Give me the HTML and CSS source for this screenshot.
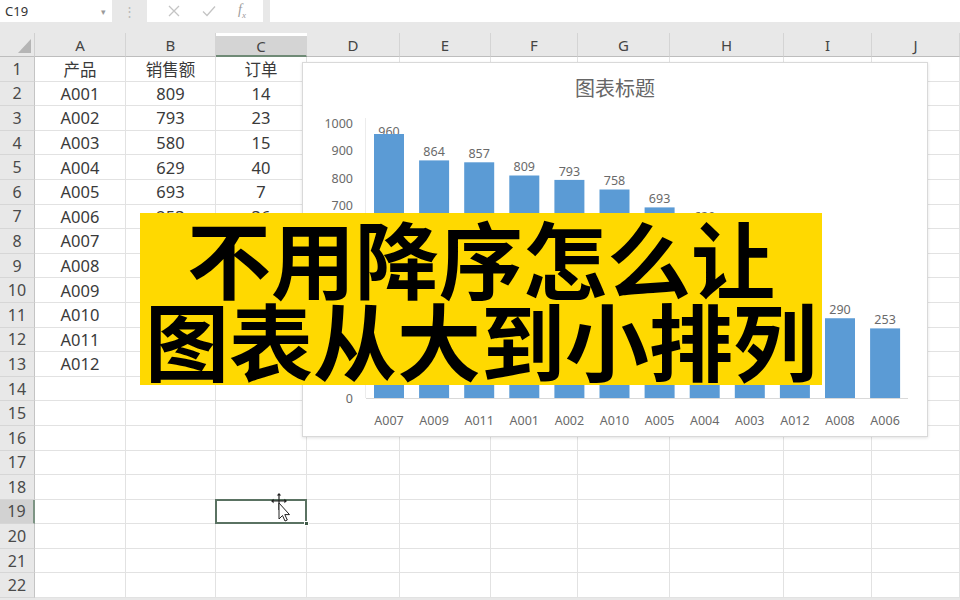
FILE: index.html
```html
<!DOCTYPE html>
<html lang="zh">
<head>
<meta charset="utf-8">
<title>Excel 图表</title>
<link rel="stylesheet" href="styles.css">
</head>
<body>
<div class="app">
  <div class="formula-bar">
    <div class="name-box"><span class="cell-ref">C19</span><span class="caret">▾</span></div>
    <div class="grip">⋮</div>
    <div class="fx-box">
      <svg class="fx-icon" width="12" height="12" viewBox="0 0 12 12"><path d="M1 1L11 11M11 1L1 11" stroke="#c4c4c4" stroke-width="1.3" fill="none"/></svg>
      <svg class="fx-icon" width="14" height="12" viewBox="0 0 14 12"><path d="M1 6.5L5 10.5L13 1.5" stroke="#c4c4c4" stroke-width="1.3" fill="none"/></svg>
      <span class="fx">f<sub>x</sub></span>
    </div>
    <div class="formula-input"></div>
  </div>

  <div class="sheet">
    <div class="corner"><span class="tri"></span></div>
    <div class="ch">A</div><div class="ch">B</div><div class="ch sel">C</div><div class="ch">D</div><div class="ch">E</div><div class="ch">F</div><div class="ch">G</div><div class="ch">H</div><div class="ch">I</div><div class="ch">J</div>

    <div class="rh">1</div><div class="c">产品</div><div class="c">销售额</div><div class="c">订单</div><div class="c"></div><div class="c"></div><div class="c"></div><div class="c"></div><div class="c"></div><div class="c"></div><div class="c"></div>
    <div class="rh">2</div><div class="c">A001</div><div class="c">809</div><div class="c">14</div><div class="c"></div><div class="c"></div><div class="c"></div><div class="c"></div><div class="c"></div><div class="c"></div><div class="c"></div>
    <div class="rh">3</div><div class="c">A002</div><div class="c">793</div><div class="c">23</div><div class="c"></div><div class="c"></div><div class="c"></div><div class="c"></div><div class="c"></div><div class="c"></div><div class="c"></div>
    <div class="rh">4</div><div class="c">A003</div><div class="c">580</div><div class="c">15</div><div class="c"></div><div class="c"></div><div class="c"></div><div class="c"></div><div class="c"></div><div class="c"></div><div class="c"></div>
    <div class="rh">5</div><div class="c">A004</div><div class="c">629</div><div class="c">40</div><div class="c"></div><div class="c"></div><div class="c"></div><div class="c"></div><div class="c"></div><div class="c"></div><div class="c"></div>
    <div class="rh">6</div><div class="c">A005</div><div class="c">693</div><div class="c">7</div><div class="c"></div><div class="c"></div><div class="c"></div><div class="c"></div><div class="c"></div><div class="c"></div><div class="c"></div>
    <div class="rh">7</div><div class="c">A006</div><div class="c">253</div><div class="c">36</div><div class="c"></div><div class="c"></div><div class="c"></div><div class="c"></div><div class="c"></div><div class="c"></div><div class="c"></div>
    <div class="rh">8</div><div class="c">A007</div><div class="c"></div><div class="c"></div><div class="c"></div><div class="c"></div><div class="c"></div><div class="c"></div><div class="c"></div><div class="c"></div><div class="c"></div>
    <div class="rh">9</div><div class="c">A008</div><div class="c"></div><div class="c"></div><div class="c"></div><div class="c"></div><div class="c"></div><div class="c"></div><div class="c"></div><div class="c"></div><div class="c"></div>
    <div class="rh">10</div><div class="c">A009</div><div class="c"></div><div class="c"></div><div class="c"></div><div class="c"></div><div class="c"></div><div class="c"></div><div class="c"></div><div class="c"></div><div class="c"></div>
    <div class="rh">11</div><div class="c">A010</div><div class="c"></div><div class="c"></div><div class="c"></div><div class="c"></div><div class="c"></div><div class="c"></div><div class="c"></div><div class="c"></div><div class="c"></div>
    <div class="rh">12</div><div class="c">A011</div><div class="c"></div><div class="c"></div><div class="c"></div><div class="c"></div><div class="c"></div><div class="c"></div><div class="c"></div><div class="c"></div><div class="c"></div>
    <div class="rh">13</div><div class="c">A012</div><div class="c"></div><div class="c"></div><div class="c"></div><div class="c"></div><div class="c"></div><div class="c"></div><div class="c"></div><div class="c"></div><div class="c"></div>
    <div class="rh">14</div><div class="c"></div><div class="c"></div><div class="c"></div><div class="c"></div><div class="c"></div><div class="c"></div><div class="c"></div><div class="c"></div><div class="c"></div><div class="c"></div>
    <div class="rh">15</div><div class="c"></div><div class="c"></div><div class="c"></div><div class="c"></div><div class="c"></div><div class="c"></div><div class="c"></div><div class="c"></div><div class="c"></div><div class="c"></div>
    <div class="rh">16</div><div class="c"></div><div class="c"></div><div class="c"></div><div class="c"></div><div class="c"></div><div class="c"></div><div class="c"></div><div class="c"></div><div class="c"></div><div class="c"></div>
    <div class="rh">17</div><div class="c"></div><div class="c"></div><div class="c"></div><div class="c"></div><div class="c"></div><div class="c"></div><div class="c"></div><div class="c"></div><div class="c"></div><div class="c"></div>
    <div class="rh">18</div><div class="c"></div><div class="c"></div><div class="c"></div><div class="c"></div><div class="c"></div><div class="c"></div><div class="c"></div><div class="c"></div><div class="c"></div><div class="c"></div>
    <div class="rh sel">19</div><div class="c"></div><div class="c"></div><div class="c active"><span class="handle"></span></div><div class="c"></div><div class="c"></div><div class="c"></div><div class="c"></div><div class="c"></div><div class="c"></div><div class="c"></div>
    <div class="rh">20</div><div class="c"></div><div class="c"></div><div class="c"></div><div class="c"></div><div class="c"></div><div class="c"></div><div class="c"></div><div class="c"></div><div class="c"></div><div class="c"></div>
    <div class="rh">21</div><div class="c"></div><div class="c"></div><div class="c"></div><div class="c"></div><div class="c"></div><div class="c"></div><div class="c"></div><div class="c"></div><div class="c"></div><div class="c"></div>
    <div class="rh">22</div><div class="c"></div><div class="c"></div><div class="c"></div><div class="c"></div><div class="c"></div><div class="c"></div><div class="c"></div><div class="c"></div><div class="c"></div><div class="c"></div>
  </div>

  <div class="chart">
    <svg class="chart-svg" width="626" height="375" viewBox="0 0 626 375">
      <text class="title" x="313" y="34" text-anchor="middle">图表标题</text>
      <g class="ylab" text-anchor="end">
        <text x="51" y="65.5">1000</text>
        <text x="51" y="93">900</text>
        <text x="51" y="120.5">800</text>
        <text x="51" y="148">700</text>
        <text x="51" y="340.5">0</text>
      </g>
      <line x1="63.5" y1="56" x2="63.5" y2="336" stroke="#ececec" stroke-width="1"/>
      <line x1="64" y1="336.5" x2="606" y2="336.5" stroke="#d9d9d9" stroke-width="1"/>
      <g class="dlab" text-anchor="middle">
        <text x="87" y="74">960</text>
        <text x="132.1" y="94">864</text>
        <text x="177.2" y="96">857</text>
        <text x="222.3" y="109">809</text>
        <text x="267.4" y="113.5">793</text>
        <text x="312.5" y="123">758</text>
        <text x="357.6" y="141">693</text>
        <text x="402.7" y="158.5">629</text>
        <text x="538" y="251.5">290</text>
        <text x="583.1" y="262">253</text>
      </g>
      <g fill="#5b9bd5">
        <rect x="72" y="72" width="30" height="264"/>
        <rect x="117.1" y="98.4" width="30" height="237.6"/>
        <rect x="162.2" y="100.3" width="30" height="235.7"/>
        <rect x="207.3" y="113.5" width="30" height="222.5"/>
        <rect x="252.4" y="117.9" width="30" height="218.1"/>
        <rect x="297.5" y="127.5" width="30" height="208.5"/>
        <rect x="342.6" y="145.4" width="30" height="190.6"/>
        <rect x="387.7" y="163" width="30" height="173"/>
        <rect x="432.8" y="176.5" width="30" height="159.5"/>
        <rect x="477.9" y="210.6" width="30" height="125.4"/>
        <rect x="523" y="256.25" width="30" height="79.75"/>
        <rect x="568.1" y="266.4" width="30" height="69.6"/>
      </g>
      <g class="xlab" text-anchor="middle">
        <text x="87" y="362.5">A007</text>
        <text x="132.1" y="362.5">A009</text>
        <text x="177.2" y="362.5">A011</text>
        <text x="222.3" y="362.5">A001</text>
        <text x="267.4" y="362.5">A002</text>
        <text x="312.5" y="362.5">A010</text>
        <text x="357.6" y="362.5">A005</text>
        <text x="402.7" y="362.5">A004</text>
        <text x="447.8" y="362.5">A003</text>
        <text x="492.9" y="362.5">A012</text>
        <text x="538" y="362.5">A008</text>
        <text x="583.1" y="362.5">A006</text>
      </g>
    </svg>
  </div>

  <div class="banner">
    <div class="banner-line">不用降序怎么让</div>
    <div class="banner-line">图表从大到小排列</div>
  </div>

  <svg class="cursor" width="24" height="32" viewBox="0 0 24 32">
    <g stroke="#222" stroke-width="1.2" fill="none">
      <path d="M8 1V17M1 8H15"/>
    </g>
    <g fill="#222">
      <path d="M8 0L5.8 2.6H10.2Z"/>
      <path d="M0 8L2.6 5.8V10.2Z"/>
      <path d="M16 8L13.4 5.8V10.2Z"/>
    </g>
    <path d="M8 10L8 26L11.5 22.5L14 28L16.3 27L13.8 21.6L18.5 21.6Z" fill="#fff" stroke="#222" stroke-width="1"/>
  </svg>
</div>
</body>
</html>
```

FILE: styles.css
```css
* { box-sizing: border-box; }

html, body {
  margin: 0;
  padding: 0;
  background: #ffffff;
}

.app {
  position: relative;
  width: 960px;
  height: 600px;
  overflow: hidden;
  background: #e8e8e8;
  font-family: "Noto Sans", "Noto Sans CJK SC", sans-serif;
}

/* formula bar */
.formula-bar {
  display: flex;
  align-items: stretch;
  height: 22px;
  margin-bottom: 11px;
}

.name-box {
  width: 112px;
  background: #ffffff;
  display: flex;
  align-items: center;
  justify-content: space-between;
  padding: 0 6px 0 5px;
  font-size: 13px;
  color: #333;
}

.caret {
  font-size: 9px;
  color: #9a9a9a;
}

.grip {
  width: 35px;
  display: flex;
  align-items: center;
  justify-content: center;
  color: #b8b8b8;
  font-size: 13px;
}

.fx-box {
  width: 116px;
  background: #ffffff;
  display: flex;
  align-items: center;
  justify-content: space-around;
  padding: 0 6px 0 10px;
}

.fx {
  font-family: "Liberation Serif", serif;
  font-style: italic;
  font-size: 14px;
  color: #9c9c9c;
}

.fx sub {
  font-size: 9px;
}

.formula-input {
  flex: 1;
  margin-left: 7px;
  background: #ffffff;
}

/* sheet grid */
.sheet {
  display: grid;
  grid-template-columns: 35px 91px 90px 91px 93px 91px 87px 92px 114px 88px 1fr;
  grid-template-rows: 24px repeat(22, 24.6px);
  background: #ffffff;
}

.corner {
  background: #e8e8e8;
  border-bottom: 1px solid #bdbdbd;
  border-right: 1px solid #d0d0d0;
  position: relative;
}

.tri {
  position: absolute;
  right: 3px;
  bottom: 3px;
  width: 0;
  height: 0;
  border-left: 13px solid transparent;
  border-bottom: 14px solid #b5b5b5;
}

.ch {
  background: #e8e8e8;
  border-bottom: 1px solid #bdbdbd;
  border-right: 1px solid #d4d4d4;
  display: flex;
  align-items: center;
  justify-content: center;
  font-size: 15px;
  color: #444;
}

.ch.sel {
  background: #d4d4d4;
  border-bottom: 2px solid #6f8a76;
  margin-top: 3px;
}

.rh {
  background: #e8e8e8;
  border-right: 1px solid #c4c4c4;
  border-bottom: 1px solid #d6d6d6;
  display: flex;
  align-items: center;
  justify-content: center;
  font-size: 16px;
  color: #4a4a4a;
}

.rh.sel {
  background: #d2d2d2;
  border-right: 2px solid #7d9484;
}

.c {
  border-right: 1px solid #e2e2e2;
  border-bottom: 1px solid #e2e2e2;
  display: flex;
  align-items: center;
  justify-content: center;
  font-size: 16.5px;
  color: #3a3a3a;
  white-space: nowrap;
}

.c.active {
  position: relative;
  border: 2px solid #5a7262;
  margin: -1px 0 0 -1px;
}

.handle {
  position: absolute;
  right: -4px;
  bottom: -4px;
  width: 5px;
  height: 5px;
  background: #3f5a47;
  border: 1px solid #ffffff;
}

/* chart */
.chart {
  position: absolute;
  left: 302px;
  top: 62px;
  width: 626px;
  height: 375px;
  background: #ffffff;
  border: 1px solid #d9d9d9;
  box-shadow: 0 1px 3px rgba(0, 0, 0, 0.12);
}

.chart-svg {
  position: absolute;
  left: -1px;
  top: -1px;
  display: block;
}

.chart-svg text {
  font-family: "Noto Sans", "Noto Sans CJK SC", sans-serif;
  fill: #6a6a6a;
}

.chart-svg .title {
  font-family: "Noto Sans CJK SC", sans-serif;
  font-size: 20px;
  fill: #666666;
}

.ylab text,
.xlab text,
.dlab text {
  font-size: 12.5px;
}

/* banner */
.banner {
  position: absolute;
  left: 140px;
  top: 213px;
  width: 682px;
  height: 172px;
  background: #ffd900;
  display: flex;
  flex-direction: column;
  align-items: center;
  justify-content: center;
  padding-bottom: 2px;
}

.banner-line {
  font-family: "Noto Sans CJK SC", sans-serif;
  font-weight: 700;
  font-size: 84px;
  line-height: 82px;
  color: #000000;
  white-space: nowrap;
}

/* mouse cursor */
.cursor {
  position: absolute;
  left: 271px;
  top: 493px;
}
```
